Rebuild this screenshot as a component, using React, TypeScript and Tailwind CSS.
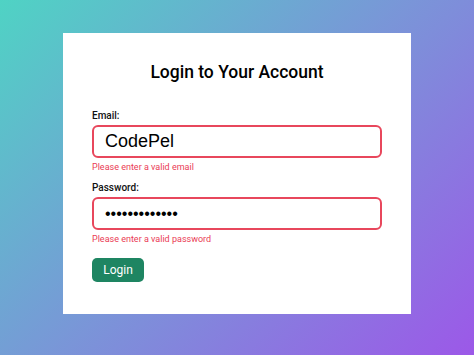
import React from "react";

export default function App() {
  return (
    <div className="w-[474px] h-[355px] bg-[linear-gradient(135deg,#4fd3c4_0%,#7a95d8_50%,#9c58e8_100%)] pl-[63px] pt-[33px] overflow-hidden">
      <div className="w-[348px] h-[281px] bg-white px-[29px] pt-[27px] font-['Roboto',sans-serif]">
        <h1 className="text-center text-[17.5px] leading-[24px] font-medium text-black">Login to Your Account</h1>
        <div className="mt-[26px] flex flex-col">
          <label className="text-[10px] leading-[12px] font-medium text-[#111]">Email:</label>
          <div className="mt-[3px] h-[33px] w-[290px] rounded-[6px] border-2 border-[#e8475c] flex items-center pl-[11px]">
            <span className="font-['Liberation_Sans',Arial,sans-serif] text-[18px] text-black">CodePel</span>
          </div>
          <div className="mt-[3px] text-[9px] leading-[12px] text-[#ea3c55]">Please enter a valid email</div>
          <label className="mt-[9px] text-[10px] leading-[12px] font-medium text-[#111]">Password:</label>
          <div className="mt-[3px] h-[33px] w-[290px] rounded-[6px] border-2 border-[#e8475c] flex items-center pl-[11px]">
            <span className="font-['Liberation_Sans',Arial,sans-serif] text-[16px] text-black">•••••••••••••</span>
          </div>
          <div className="mt-[3px] text-[9px] leading-[12px] text-[#ea3c55]">Please enter a valid password</div>
          <button className="mt-[13px] w-[52px] h-[24px] rounded-[5px] bg-[#1e8562] text-white text-[12px] leading-none flex items-center justify-center">Login</button>
        </div>
      </div>
    </div>
  );
}
